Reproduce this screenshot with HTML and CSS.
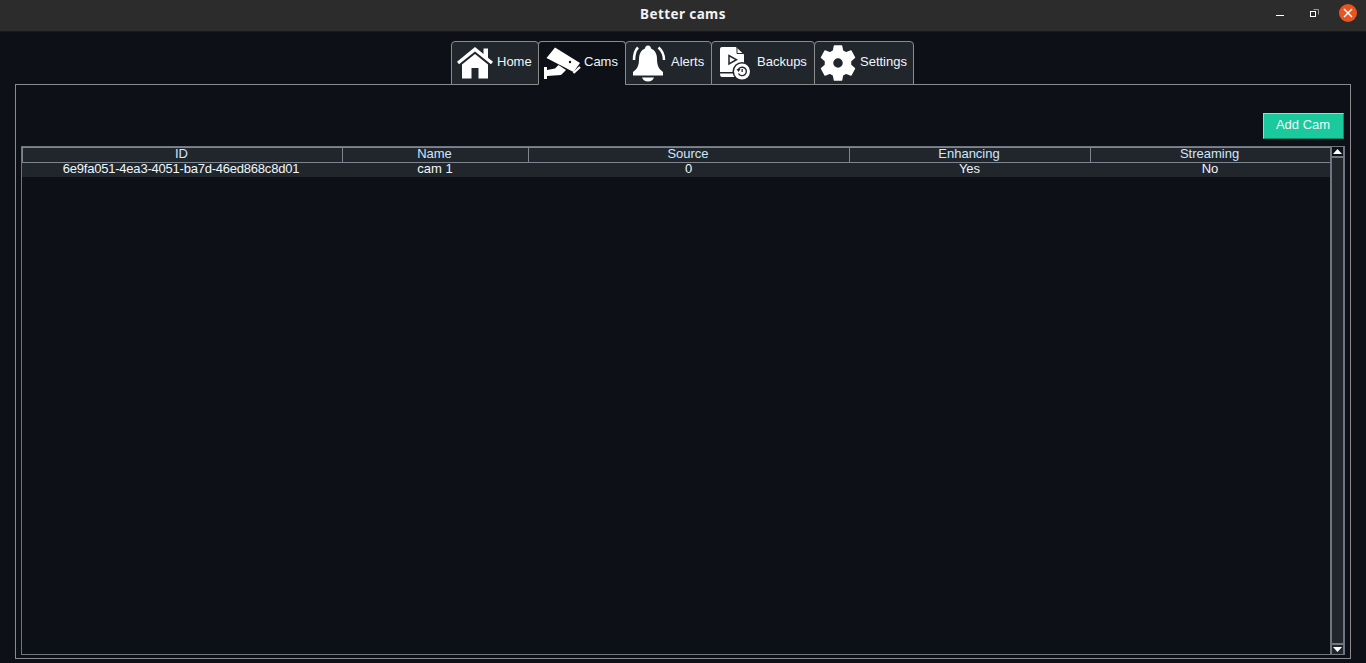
FILE: index.html
```html
<!DOCTYPE html>
<html lang="en">
<head>
<meta charset="utf-8">
<title>Better cams</title>
<link rel="stylesheet" href="styles.css">
</head>
<body>
<header class="titlebar">
  <span class="title">Better cams</span>
  <div class="winctl">
    <svg class="ctl" width="12" height="12" viewBox="0 0 12 12"><rect x="2" y="8" width="8" height="1" fill="#fff"/></svg>
    <svg class="ctl" width="12" height="12" viewBox="0 0 12 12"><path d="M5.500 2.500H10.500V7.500" fill="none" stroke="#999"/><rect x="2.500" y="4.500" width="5" height="5" fill="none" stroke="#fff"/></svg>
    <span class="close"><svg width="10" height="10" viewBox="0 0 10 10"><path d="M1 1L9 9M9 1L1 9" stroke="#fff" stroke-width="1.500"/></svg></span>
  </div>
</header>
<nav class="tabs">
  <div class="tab tab-home">
    <svg class="ico" width="36" height="32" viewBox="0 0 36 32"><path fill="#fff" d="M18 0L26.500 7V1.500H31V10.700L36 14.800L34 17.200L18 4.500L2 17.200L0 14.800ZM18 7L31 17.500V31.500H21.500V21H14.500V31.500H5V17.500Z"/></svg>
    <span>Home</span>
  </div>
  <div class="tab tab-active tab-cams">
    <svg class="ico" width="37" height="32" viewBox="544 47 37 32"><path fill="#fff" d="M555 47.500L580 63L573.500 72L546.500 58Z"/><circle cx="570" cy="62" r="1.200" fill="#0d1117"/><path fill="none" stroke="#fff" stroke-width="2.200" d="M580 67L573.500 73"/><path fill="#fff" d="M544 67H547V70L555 68.500L558.500 65L566 70L561 75L547 76V79H544Z"/></svg>
    <span>Cams</span>
  </div>
  <div class="tab tab-alerts">
    <svg class="ico" width="34" height="37" viewBox="632 45 34 37"><path fill="#fff" d="M648 45.500C650 45.500 651 47 651 48.500C655 50 657 54 657 59C657 66 659 69 663 72V75.500H633V72C637 69 639 66 639 59C639 54 641 50 645 48.500C645 47 646 45.500 648 45.500Z"/><path fill="#fff" d="M642 77.500H654C653 80 651 81.500 648 81.500C645 81.500 643 80 642 77.500Z"/><path fill="none" stroke="#fff" stroke-width="2.500" d="M638 47.500C635 50.500 634 54 634 60M658.500 47.500C662 50.500 664 54 664 60"/></svg>
    <span>Alerts</span>
  </div>
  <div class="tab tab-backups">
    <svg class="ico" width="33" height="35" viewBox="719 46 33 35"><path fill="#fff" d="M722 47H736L744 54.500V72H720V49Q720 47 722 47Z"/><path fill="none" stroke="#21262d" d="M737 47V53.500H744"/><path fill="#fff" d="M720 73.500H736V77H722Q720 77 720 73.500Z"/><path fill="none" stroke="#21262d" stroke-width="1.500" d="M729 55.500V64L736.500 59.750Z"/><circle cx="742" cy="71.500" r="9.500" fill="#21262d"/><circle cx="742" cy="71.500" r="8" fill="#fff"/><path fill="none" stroke="#21262d" stroke-width="1.400" d="M738.200 70A4.200 4.200 0 1 1 738.500 73.500"/><path fill="#21262d" d="M736.500 69H740.500L738.500 72ZM741.500 69H742.800V72H741.500Z"/></svg>
    <span>Backups</span>
  </div>
  <div class="tab tab-settings">
    <svg class="ico" width="36" height="36" viewBox="0 0 36 36"><path fill="#fff" stroke="#fff" stroke-width="1.500" stroke-linejoin="round" fill-rule="evenodd" d="M14.500 1H21.500L22.500 6L26 8L31 6L34.500 12.500L30.500 16V20L34.500 23.500L31 30L26 28L22.500 30L21.500 35H14.500L13.500 30L10 28L5 30L1.500 23.500L5.500 20V16L1.500 12.500L5 6L10 8L13.500 6ZM18 12.500A5.500 5.500 0 1 0 18 23.500A5.500 5.500 0 1 0 18 12.500Z"/></svg>
    <span>Settings</span>
  </div>
</nav>
<main class="pane">
  <div class="toolbar"><button class="add-btn">Add Cam</button></div>
  <section class="tablewrap">
    <div class="table">
      <div class="thead">
        <div class="th">ID</div>
        <div class="th">Name</div>
        <div class="th">Source</div>
        <div class="th">Enhancing</div>
        <div class="th">Streaming</div>
      </div>
      <div class="trow">
        <div class="td td-id">6e9fa051-4ea3-4051-ba7d-46ed868c8d01</div>
        <div class="td">cam 1</div>
        <div class="td">0</div>
        <div class="td">Yes</div>
        <div class="td">No</div>
      </div>
    </div>
    <div class="scrollbar">
      <div class="sbtn sbtn-up"><svg width="9" height="5" viewBox="0 0 9 5"><path d="M4.500 0L9 5H0Z" fill="#fff"/></svg></div>
      <div class="strack"></div>
      <div class="sbtn sbtn-down"><svg width="9" height="5" viewBox="0 0 9 5"><path d="M4.500 5L9 0H0Z" fill="#fff"/></svg></div>
    </div>
  </section>
</main>
</body>
</html>
```
FILE: styles.css
```css
* { box-sizing: border-box; }
html, body { margin: 0; height: 100%; }
body {
  width: 1366px;
  height: 663px;
  overflow: hidden;
  background: #0d1117;
  color: #f0f6fc;
  font-family: "Liberation Sans", Arial, sans-serif;
  font-size: 13px;
  display: flex;
  flex-direction: column;
}
.titlebar {
  height: 32px;
  flex: none;
  background: #2c2c2c;
  border-bottom: 1px solid #1a1a1a;
  display: flex;
  align-items: center;
  justify-content: center;
  position: relative;
}
.title {
  font-family: "Noto Sans", sans-serif;
  font-weight: 700;
  font-size: 13.500px;
  color: #f2f2f2;
  letter-spacing: 0.400px;
  padding-bottom: 4px;
}
.winctl {
  position: absolute;
  right: 9px;
  top: 4px;
  display: flex;
  align-items: center;
  gap: 22px;
}
.close {
  width: 18px;
  height: 18px;
  border-radius: 50%;
  background: #e95420;
  display: flex;
  align-items: center;
  justify-content: center;
  margin-left: -3px;
}
.tabs {
  flex: none;
  margin-top: 9px;
  padding-left: 451px;
  height: 44px;
  display: flex;
  align-items: stretch;
  position: relative;
  z-index: 1;
}
.tab {
  background: #21262d;
  border: 1px solid #8b8b8b;
  border-radius: 4px 4px 0 0;
  display: flex;
  align-items: center;
  height: 44px;
  color: #f0f6fc;
  font-size: 13px;
}
.tab span { margin-bottom: 4px; }
.tab-active {
  background: #0d1117;
  border-bottom-color: #0d1117;
}
.tab-home { width: 88px; padding-left: 5px; gap: 4px; }
.tab-cams { width: 88px; margin-left: -1px; padding-left: 5px; gap: 3px; }
.tab-alerts { width: 87px; margin-left: -1px; padding-left: 6px; gap: 5px; }
.tab-backups { width: 104px; margin-left: -1px; padding-left: 7px; gap: 5px; }
.tab-settings { width: 100px; margin-left: -1px; padding-left: 5px; gap: 4px; }
.ico { flex: none; }
.pane {
  width: 1336px;
  height: 575px;
  margin-left: 15px;
  margin-top: -1px;
  border: 1px solid #8b8b8b;
  padding: 28px 5px 3px 5px;
  display: flex;
  flex-direction: column;
}
.toolbar {
  flex: none;
  display: flex;
  justify-content: flex-end;
  height: 33px;
  padding-right: 1px;
}
.add-btn {
  width: 81px;
  height: 26px;
  background: #1ac99c;
  color: #f0f6fc;
  font: 13px "Liberation Sans", Arial, sans-serif;
  padding: 0 1px 3px 0;
  border-style: solid;
  border-width: 1px;
  border-color: #7fe8cd #0f8a6b #0f8a6b #7fe8cd;
}
.tablewrap {
  flex: 1;
  display: flex;
  min-height: 0;
  border: 1px solid #6e7681;
  border-right: 0;
}
.table { width: 1308px; flex: none; }
.thead, .trow {
  display: grid;
  grid-template-columns: 320px 186px 321px 241px 240px;
}
.thead { height: 16px; }
.th {
  background: #21262d;
  border: 1px solid #7d8590;
  margin-right: -1px;
  padding-right: 2px;
  color: #cfe6ff;
  text-align: center;
  line-height: 12px;
  height: 16px;
}
.trow { height: 14px; background: #21262d; }
.td {
  text-align: center;
  line-height: 11px;
  color: #f0f6fc;
  height: 14px;
}
.td-id { letter-spacing: -0.220px; padding-right: 2px; }
.scrollbar {
  width: 15px;
  display: flex;
  flex-direction: column;
  border-left: 2px solid #6e7681;
  border-right: 2px solid #6e7681;
}
.sbtn {
  height: 11px;
  flex: none;
  display: flex;
  align-items: center;
  justify-content: center;
}
.sbtn-up { background: #0d1117; border-bottom: 2px solid #6e7681; }
.sbtn-down { background: #21262d; border-top: 2px solid #6e7681; }
.strack { flex: 1; background: #21262d; }
```
